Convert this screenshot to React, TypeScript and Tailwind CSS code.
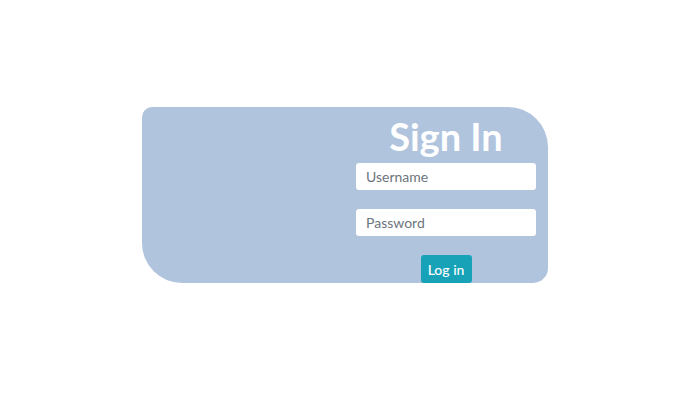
import React from "react";

export default function App() {
  return (
    <div className="min-h-[412px] w-[680px] bg-white pt-[107px] pl-[142px]" style={{ fontFamily: 'Lato, "Noto Sans", sans-serif' }}>
      <div className="flex h-[176px] w-[406px] justify-end rounded-tl-[10px] rounded-tr-[40px] rounded-bl-[40px] rounded-br-[15px] bg-[#b0c4de] pr-[12px]">
        <div className="flex w-[180px] flex-col items-center">
          <h1 className="mt-[6px] h-[50px] text-[38px] font-bold leading-[46px] text-white">Sign In</h1>
          <input
            type="text"
            placeholder="Username"
            className="h-[27px] w-full rounded-[3px] bg-white px-[10px] text-[14px] text-gray-700 outline-none placeholder:text-[#6c757d]"
          />
          <input
            type="password"
            placeholder="Password"
            className="mt-[19px] h-[27px] w-full rounded-[3px] bg-white px-[10px] text-[14px] text-gray-700 outline-none placeholder:text-[#6c757d]"
          />
          <button className="mt-[19px] h-[28px] w-[51px] rounded-[3px] bg-[#17a2b8] text-[14px] font-medium text-white">
            Log in
          </button>
        </div>
      </div>
    </div>
  );
}
